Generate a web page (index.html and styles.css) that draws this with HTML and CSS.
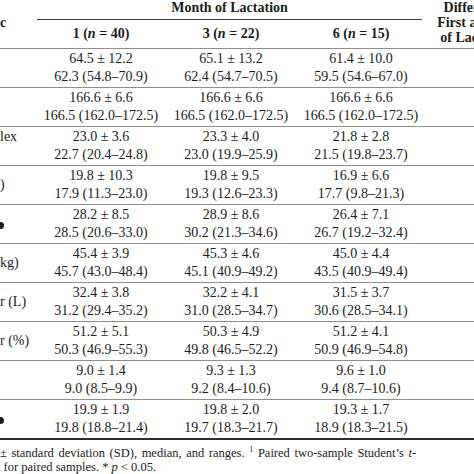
FILE: index.html
```html
<!DOCTYPE html>
<html lang="en">
<head>
    <meta charset="UTF-8">
    <meta name="viewport" content="width=device-width, initial-scale=1.0">
    <title>Lactation Table</title>
    <link rel="stylesheet" href="styles.css">
</head>
<body>
    <div class="page">
        <table class="stats">
            <colgroup>
                <col class="col-label">
                <col class="col-month">
                <col class="col-month">
                <col class="col-month">
                <col class="col-diff">
            </colgroup>
            <thead>
                <tr class="head-top">
                    <th rowspan="2" class="label">c</th>
                    <th colspan="3" class="month"><div class="month-title">Month of Lactation</div></th>
                    <th rowspan="2" class="diff">Difference Between<br>First and Last Month<br>of Lactation (<i>n</i> = 15)</th>
                </tr>
                <tr class="head-sub">
                    <th>1 (<i>n</i> = 40)</th>
                    <th>3 (<i>n</i> = 22)</th>
                    <th>6 (<i>n</i> = 15)</th>
                </tr>
            </thead>
            <tbody>
                <tr>
                    <td class="label"></td>
                    <td>64.5 ± 12.2<br>62.3 (54.8–70.9)</td>
                    <td>65.1 ± 13.2<br>62.4 (54.7–70.5)</td>
                    <td>61.4 ± 10.0<br>59.5 (54.6–67.0)</td>
                    <td></td>
                </tr>
                <tr>
                    <td class="label"></td>
                    <td>166.6 ± 6.6<br>166.5 (162.0–172.5)</td>
                    <td>166.6 ± 6.6<br>166.5 (162.0–172.5)</td>
                    <td>166.6 ± 6.6<br>166.5 (162.0–172.5)</td>
                    <td></td>
                </tr>
                <tr>
                    <td class="label">lex<br>&nbsp;</td>
                    <td>23.0 ± 3.6<br>22.7 (20.4–24.8)</td>
                    <td>23.3 ± 4.0<br>23.0 (19.9–25.9)</td>
                    <td>21.8 ± 2.8<br>21.5 (19.8–23.7)</td>
                    <td></td>
                </tr>
                <tr>
                    <td class="label">)</td>
                    <td>19.8 ± 10.3<br>17.9 (11.3–23.0)</td>
                    <td>19.8 ± 9.5<br>19.3 (12.6–23.3)</td>
                    <td>16.9 ± 6.6<br>17.7 (9.8–21.3)</td>
                    <td></td>
                </tr>
                <tr>
                    <td class="label"><span class="blob"></span></td>
                    <td>28.2 ± 8.5<br>28.5 (20.6–33.0)</td>
                    <td>28.9 ± 8.6<br>30.2 (21.3–34.6)</td>
                    <td>26.4 ± 7.1<br>26.7 (19.2–32.4)</td>
                    <td></td>
                </tr>
                <tr>
                    <td class="label">kg)</td>
                    <td>45.4 ± 3.9<br>45.7 (43.0–48.4)</td>
                    <td>45.3 ± 4.6<br>45.1 (40.9–49.2)</td>
                    <td>45.0 ± 4.4<br>43.5 (40.9–49.4)</td>
                    <td></td>
                </tr>
                <tr>
                    <td class="label">r (L)</td>
                    <td>32.4 ± 3.8<br>31.2 (29.4–35.2)</td>
                    <td>32.2 ± 4.1<br>31.0 (28.5–34.7)</td>
                    <td>31.5 ± 3.7<br>30.6 (28.5–34.1)</td>
                    <td></td>
                </tr>
                <tr>
                    <td class="label">r (%)</td>
                    <td>51.2 ± 5.1<br>50.3 (46.9–55.3)</td>
                    <td>50.3 ± 4.9<br>49.8 (46.5–52.2)</td>
                    <td>51.2 ± 4.1<br>50.9 (46.9–54.8)</td>
                    <td></td>
                </tr>
                <tr>
                    <td class="label"></td>
                    <td>9.0 ± 1.4<br>9.0 (8.5–9.9)</td>
                    <td>9.3 ± 1.3<br>9.2 (8.4–10.6)</td>
                    <td>9.6 ± 1.0<br>9.4 (8.7–10.6)</td>
                    <td></td>
                </tr>
                <tr>
                    <td class="label"><span class="blob"></span></td>
                    <td>19.9 ± 1.9<br>19.8 (18.8–21.4)</td>
                    <td>19.8 ± 2.0<br>19.7 (18.3–21.7)</td>
                    <td>19.3 ± 1.7<br>18.9 (18.3–21.5)</td>
                    <td></td>
                </tr>
            </tbody>
        </table>
        <div class="note">
            <div class="note-line full">± standard deviation (SD), median, and ranges. <sup>1</sup> Paired two-sample Student’s <i>t</i>-</div>
            <div class="note-line cut">t for paired samples. * <i>p</i> &lt; 0.05.</div>
        </div>
    </div>
</body>
</html>
```

FILE: styles.css
```css
body {
    margin: 0;
    background-color: #ffffff;
    font-family: "Liberation Serif", "Times New Roman", serif;
    color: #1c1c1c;
}

.page {
    width: 474px;
    height: 474px;
    overflow: hidden;
}

.stats {
    table-layout: fixed;
    width: 577px;
    border-collapse: collapse;
    font-size: 14px;
}

.col-label {
    width: 36px;
}

.col-month {
    width: 130px;
}

.col-diff {
    width: 151px;
}

th {
    font-weight: bold;
    text-align: center;
    padding: 0;
    line-height: 15px;
}

.head-top {
    height: 20px;
}

.head-sub th {
    height: 26px;
    padding-bottom: 2px;
}

thead {
    border-bottom: 1px solid #8f8f8f;
}

.month {
    vertical-align: top;
}

.month-title {
    margin: 0 4px 0 1px;
    padding: 0 0 4px;
    border-bottom: 1px solid #3a3a3a;
}

.diff {
    vertical-align: top;
    padding-top: 0;
    line-height: 15px;
}

th.label {
    text-align: left;
    vertical-align: middle;
    padding-bottom: 3px;
}

td {
    text-align: center;
    vertical-align: middle;
    line-height: 18px;
    padding: 1px 0;
    height: 36px;
    white-space: nowrap;
}

tbody tr {
    border-top: 1px solid #8f8f8f;
}

tbody tr:last-child {
    border-bottom: 2px solid #2e2e2e;
}

td.label {
    text-align: left;
    overflow: hidden;
}

.blob {
    display: inline-block;
    width: 4px;
    height: 7px;
    background-color: #1c1c1c;
    border-radius: 0 4px 4px 0;
    vertical-align: -1px;
}

.note {
    font-size: 12.5px;
    line-height: 14px;
    margin-top: 6px;
    white-space: nowrap;
}

.note sup {
    font-size: 8px;
    line-height: 0;
}

.note-line.full {
    word-spacing: 1.5px;
}

.note-line.cut {
    margin-left: -3px;
}
```
